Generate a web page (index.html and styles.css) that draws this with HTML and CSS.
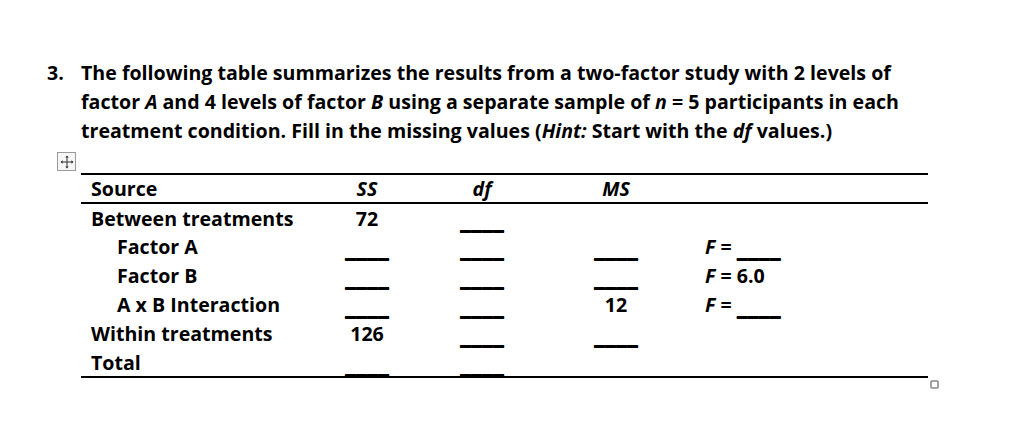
FILE: index.html
```html
<!DOCTYPE html>
<html lang="en">
<head>
<meta charset="utf-8">
<title>Two-factor ANOVA question</title>
<link rel="stylesheet" href="styles.css">
</head>
<body>
<div class="page">
  <div class="question">
    <span class="qnum">3.</span>
    <p class="qtext">The following table summarizes the results from a two-factor study with 2 levels of<br>factor <i>A</i> and 4 levels of factor <i>B</i> using a separate sample of <i>n</i> = 5 participants in each<br>treatment condition. Fill in the missing values (<i>Hint:</i> Start with the <i>df</i> values.)</p>
  </div>
  <div class="table-wrap">
    <div class="move-handle">
      <svg width="14" height="14" viewBox="0 0 14 14" aria-hidden="true">
        <path d="M7 1.5V12.5M1.5 7H12.5" stroke="#333" stroke-width="1" fill="none"/>
        <path d="M7 0.5L5.3 2.6H8.7Z M7 13.5L5.3 11.4H8.7Z M0.5 7L2.6 5.3V8.7Z M13.5 7L11.4 5.3V8.7Z" fill="#333"/>
      </svg>
    </div>
    <table class="anova">
      <colgroup>
        <col class="c-src"><col class="c-ss"><col class="c-df"><col class="c-ms"><col class="c-f">
      </colgroup>
      <thead>
        <tr><th class="src">Source</th><th><i>SS</i></th><th><i>df</i></th><th><i>MS</i></th><th></th></tr>
      </thead>
      <tbody>
        <tr><td class="src">Between treatments</td><td>72</td><td><span class="blank">____</span></td><td></td><td></td></tr>
        <tr><td class="src sub">Factor A</td><td><span class="blank">____</span></td><td><span class="blank">____</span></td><td><span class="blank">____</span></td><td class="f"><i>F</i> = <span class="blank">____</span></td></tr>
        <tr><td class="src sub">Factor B</td><td><span class="blank">____</span></td><td><span class="blank">____</span></td><td><span class="blank">____</span></td><td class="f"><i>F</i> = 6.0</td></tr>
        <tr><td class="src sub">A x B Interaction</td><td><span class="blank">____</span></td><td><span class="blank">____</span></td><td>12</td><td class="f"><i>F</i> = <span class="blank">____</span></td></tr>
        <tr><td class="src">Within treatments</td><td>126</td><td><span class="blank">____</span></td><td><span class="blank">____</span></td><td></td></tr>
        <tr><td class="src">Total</td><td><span class="blank">____</span></td><td><span class="blank">____</span></td><td></td><td></td></tr>
      </tbody>
    </table>
    <svg class="resize-handle" width="9" height="9" viewBox="0 0 9 9" aria-hidden="true">
      <rect x="1" y="1" width="7" height="7" rx="1" fill="#fff" stroke="#8a8a8a" stroke-width="1.6"/>
    </svg>
  </div>
</div>
</body>
</html>
```

FILE: styles.css
```css
html, body {
  margin: 0;
  padding: 0;
  background: #fff;
}

body {
  font-family: "Open Sans", "Noto Sans", "Liberation Sans", sans-serif;
  font-weight: 700;
  color: #000;
}

.page {
  padding-top: 58px;
}

.question {
  display: flex;
  font-size: 19.6px;
  line-height: 29px;
}

.qnum {
  width: 34px;
  padding-left: 47px;
  flex: none;
}

.qtext {
  margin: 0;
  white-space: nowrap;
}

.table-wrap {
  position: relative;
  margin-left: 81px;
  margin-top: 28px;
  width: 860px;
}

.move-handle {
  position: absolute;
  left: -24px;
  top: -21px;
  width: 19px;
  height: 19px;
  box-sizing: border-box;
  border: 1px solid #9a9a9a;
  background: #f6f6f6;
  display: flex;
  align-items: center;
  justify-content: center;
}

.resize-handle {
  display: block;
  margin-left: 849px;
  margin-top: 2px;
}

.anova {
  width: 847px;
  table-layout: fixed;
  border-collapse: collapse;
  font-size: 19.6px;
  border-top: 2px solid #000;
  border-bottom: 2px solid #000;
}

.c-src { width: 249px; }
.c-ss { width: 74px; }
.c-df { width: 156px; }
.c-ms { width: 112px; }
.c-f { width: 256px; }

.anova th,
.anova td {
  padding: 0;
  text-align: center;
  font-weight: 700;
  white-space: nowrap;
}

.anova thead tr {
  height: 29px;
}

.anova thead th {
  border-bottom: 2px solid #000;
}

.anova tbody tr {
  height: 29px;
}

.anova .src {
  text-align: left;
  padding-left: 10px;
}

.anova .sub {
  padding-left: 36px;
}

.anova .f {
  text-align: left;
  padding-left: 33px;
}

.blank {
  font-family: "DejaVu Sans", sans-serif;
  font-weight: 700;
  font-size: 22px;
  line-height: 1;
  position: relative;
  top: 1px;
  text-shadow: 0 0.7px 0 #000;
}
```
